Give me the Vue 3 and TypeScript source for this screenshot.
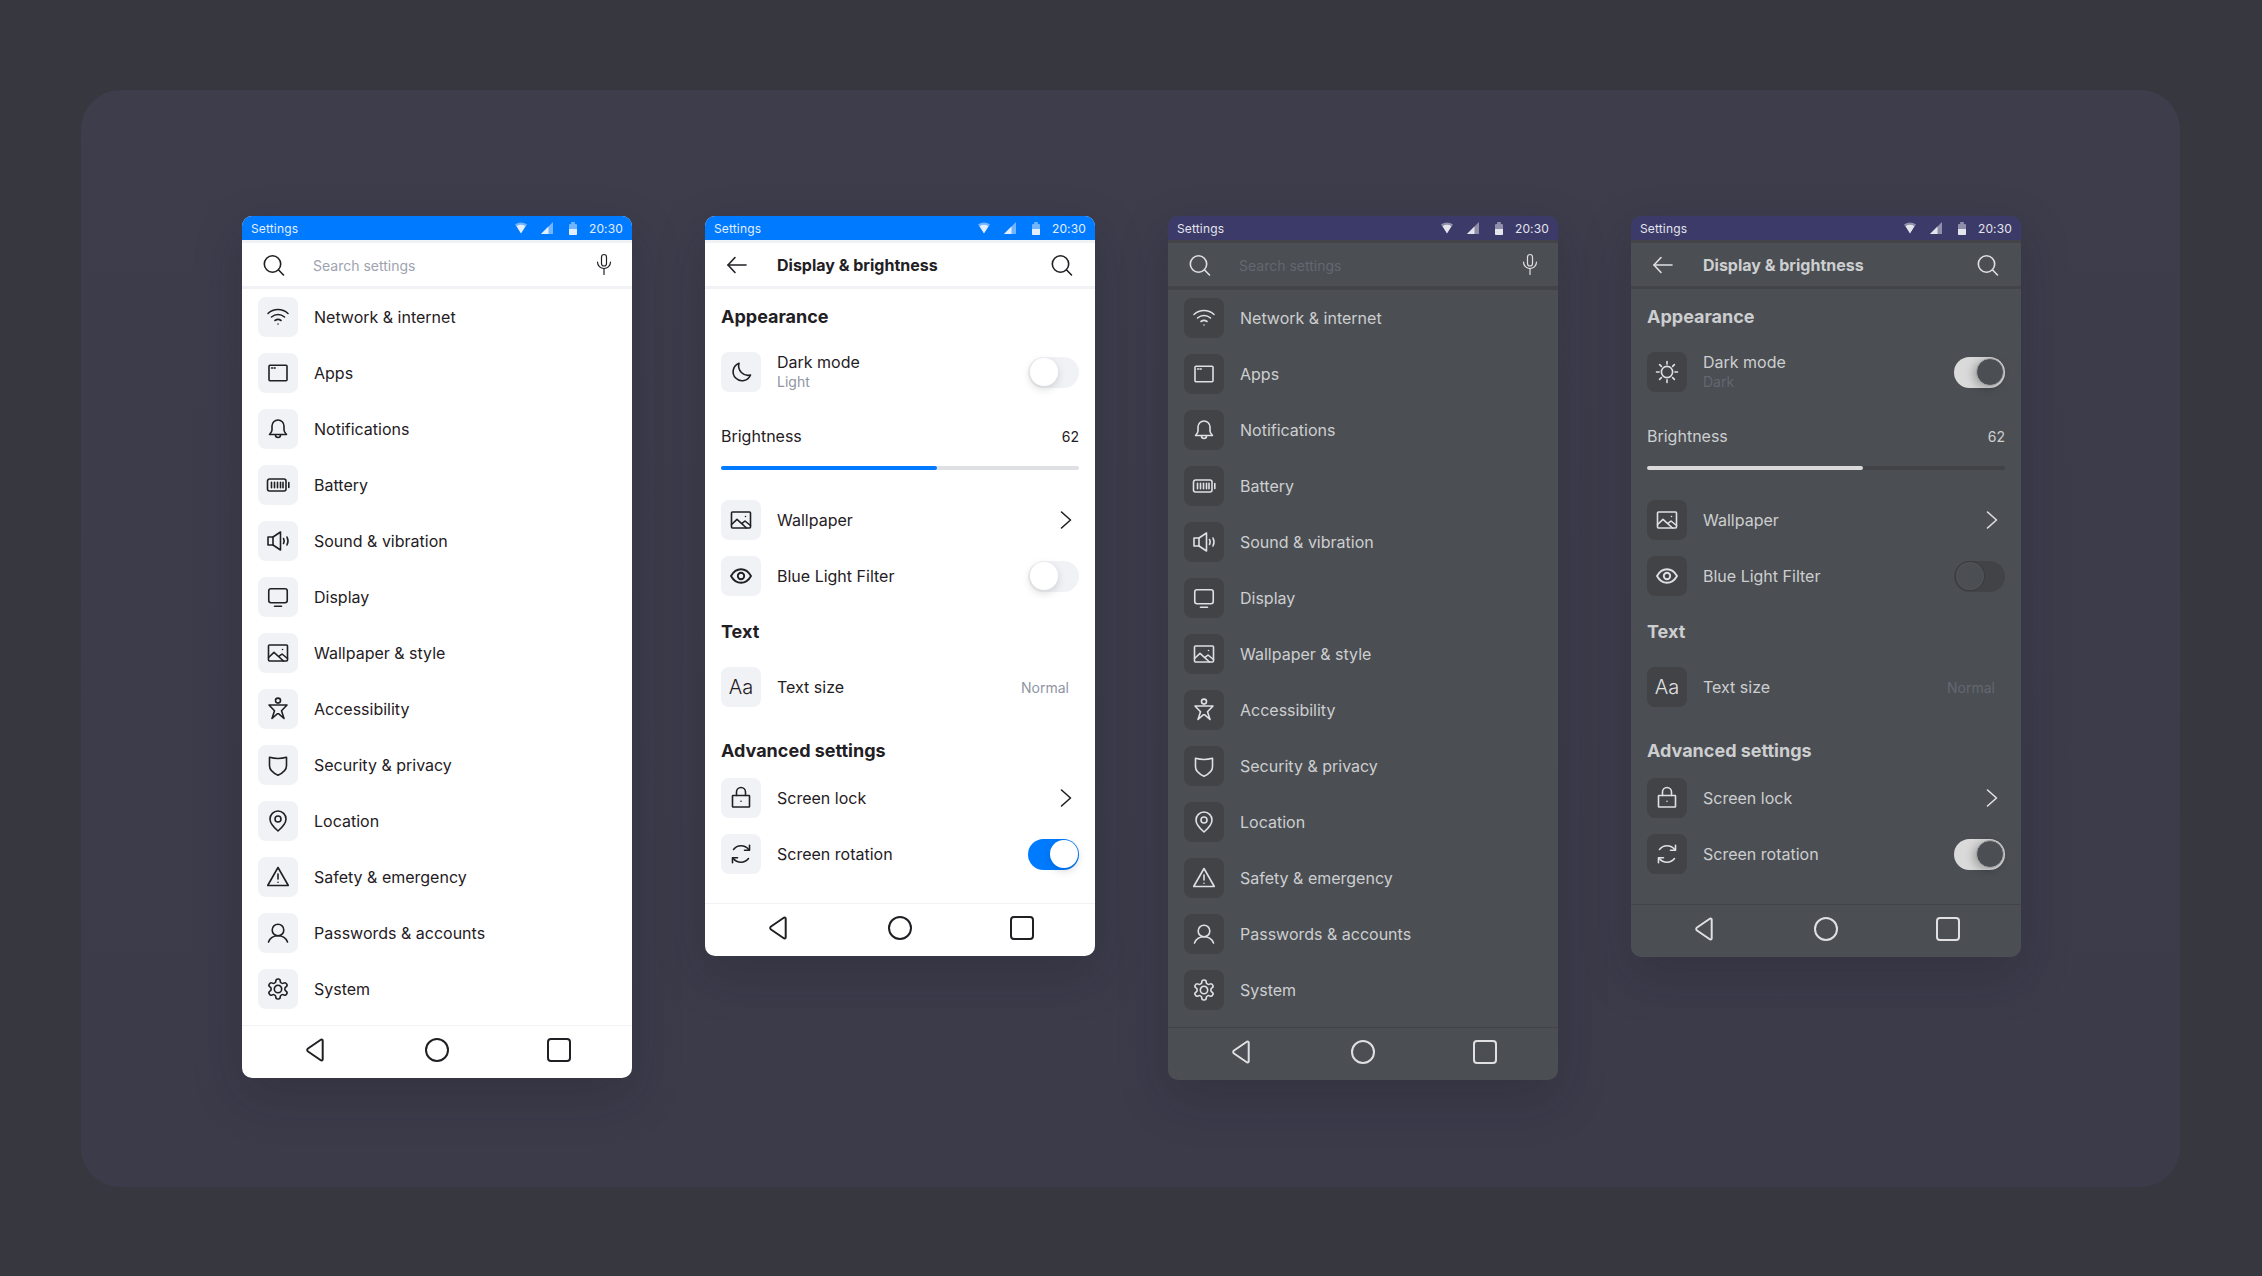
<script setup lang="ts">
import { h } from "vue"
import type { FunctionalComponent } from "vue"

function ring(cx: number, cy: number, r: number) {
	return `M${cx - r} ${cy}a${r} ${r} 0 1 0 ${r * 2} 0a${r} ${r} 0 1 0 ${-r * 2} 0z`
}

const icons: Record<string, string[]> = {
	wifi: ["M2 8.5C7.8 3.2 16.2 3.2 22 8.5", "M5.5 12C9.3 8.7 14.7 8.7 18.5 12", "M9 15.5c1.8-1.4 4.2-1.4 6 0", "M12 19h.01"],
	apps: ["M4 4.25h16a1 1 0 0 1 1 1v13.5a1 1 0 0 1-1 1H4a1 1 0 0 1-1-1V5.25a1 1 0 0 1 1-1z", "M5.6 7h1M8.2 7h1"],
	bell: ["M12 3a6 6 0 0 0-6 6v4c0 2-1 3-2.5 4.5h17C19 16 18 15 18 13V9a6 6 0 0 0-6-6z", "M9.5 18a2.5 2.5 0 0 0 5 0"],
	battery: ["M3.5 6h14.5a2 2 0 0 1 2 2v8a2 2 0 0 1-2 2H3.5a2 2 0 0 1-2-2V8a2 2 0 0 1 2-2z", "M5.5 9.2v5.6M8.5 9.2v5.6M11.5 9.2v5.6M14.5 9.2v5.6M17 9.2v5.6", "M22.8 9.5v5"],
	sound: ["M2 8h5v8H2z", "M7 8l7.5-5v18L7 16", "M17.5 9.5a5 5 0 0 1 0 5", "M21 8a9 9 0 0 1 0 8"],
	display: ["M5 3.75h14a2.25 2.25 0 0 1 2.25 2.25v9.5a2.25 2.25 0 0 1-2.25 2.25H5a2.25 2.25 0 0 1-2.25-2.25V6A2.25 2.25 0 0 1 5 3.75z", "M8.5 21.2h7"],
	image: ["M3.5 4h17a1 1 0 0 1 1 1v14a1 1 0 0 1-1 1h-17a1 1 0 0 1-1-1V5a1 1 0 0 1 1-1z", "M2.5 16.5l5.5-5.2 9.5 8.7", "M13.3 15.2l2.7-2.2 5.5 4.5", "M16.5 8.5h.01"],
	person: [ring(12, 3.6, 2.5), "M3 8h18l-5.5 5.8 2.5 7.7-5.5-4.8h-1L6 21.5l2.5-7.7z"],
	shield: ["M3.5 4.3c5.5 1.5 11.5 1.5 17 0v8.5c0 4.5-3.5 7.2-8.5 9.4C7 20 3.5 17.3 3.5 12.8z"],
	pin: ["M12 2a8 8 0 0 0-8 8c0 4.5 4.5 9 8 12 3.5-3 8-7.5 8-12a8 8 0 0 0-8-8z", ring(12, 10, 3)],
	warning: ["M12 2.5 1.7 20.5h20.6z", "M12 9v5", "M12 17.2h.01"],
	user: [ring(12, 9, 5.8), "M2.5 21c1.5-4 5-6.2 9.5-6.2s8 2.2 9.5 6.2"],
	gear: [
		"M12.22 2h-.44a2 2 0 0 0-2 2v.18a2 2 0 0 1-1 1.73l-.43.25a2 2 0 0 1-2 0l-.15-.08a2 2 0 0 0-2.73.73l-.22.38a2 2 0 0 0 .73 2.73l.15.1a2 2 0 0 1 1 1.72v.51a2 2 0 0 1-1 1.74l-.15.09a2 2 0 0 0-.73 2.73l.22.38a2 2 0 0 0 2.73.73l.15-.08a2 2 0 0 1 2 0l.43.25a2 2 0 0 1 1 1.73V20a2 2 0 0 0 2 2h.44a2 2 0 0 0 2-2v-.18a2 2 0 0 1 1-1.73l.43-.25a2 2 0 0 1 2 0l.15.08a2 2 0 0 0 2.73-.73l.22-.39a2 2 0 0 0-.73-2.73l-.15-.08a2 2 0 0 1-1-1.74v-.5a2 2 0 0 1 1-1.74l.15-.09a2 2 0 0 0 .73-2.73l-.22-.38a2 2 0 0 0-2.73-.73l-.15.08a2 2 0 0 1-2 0l-.43-.25a2 2 0 0 1-1-1.73V4a2 2 0 0 0-2-2z",
		ring(12, 12, 3.7)
	],
	moon: ["M10 3.3A9 9 0 1 0 21.5 15 9.5 9.5 0 0 1 10 3.3z"],
	sun: [ring(12, 12, 5.6), "M12 1.5v2.6M12 19.9v2.6M1.5 12h2.6M19.9 12h2.6M4.6 4.6l1.8 1.8M17.6 17.6l1.8 1.8M4.6 19.4l1.8-1.8M17.6 6.4l1.8-1.8"],
	eye: ["M2 12c2.5-4.5 6-6.8 10-6.8s7.5 2.3 10 6.8c-2.5 4.5-6 6.8-10 6.8S4.5 16.5 2 12z", ring(12, 12, 3.2)],
	lock: ["M4 9.5h16a.5.5 0 0 1 .5.5v10.5a.5.5 0 0 1-.5.5H4a.5.5 0 0 1-.5-.5V10a.5.5 0 0 1 .5-.5z", "M7.5 9.5V6a4.5 4.5 0 0 1 9 0v3.5", "M12 15.2h.01"],
	rotate: ["M4.5 7.5C6.5 5 9 3.8 12 3.8c3.5 0 6 1.5 8 4", "M20.5 3.2v5h-5", "M19.5 16.5C17.5 19 15 20.2 12 20.2c-3.5 0-6-1.5-8-4", "M3.5 20.8v-5h5"],
	chevron: ["M7.5 4l9 8-9 8"],
	back: ["M21 12H3", "M10 4.5 3 12l7 7.5"],
	search: [ring(10.5, 11, 8.2), "M16.6 17l4.9 5"],
	mic: ["M12 1.5a2.5 2.5 0 0 1 2.5 2.5v6.5a2.5 2.5 0 0 1-5 0V4A2.5 2.5 0 0 1 12 1.5z", "M5.5 9a6.5 6.5 0 0 0 13 0", "M12 15.5V21.5"],
	navBack: ["M17.8 1.7 5 10.5a1.8 1.8 0 0 0 0 3l12.8 8.8a1.2 1.2 0 0 0 1.9-1V2.7a1.2 1.2 0 0 0-1.9-1z"],
	navHome: [ring(12, 12, 11)],
	navRecent: ["M4 1h16a3 3 0 0 1 3 3v16a3 3 0 0 1-3 3H4a3 3 0 0 1-3-3V4a3 3 0 0 1 3-3z"]
}

const Ico: FunctionalComponent<{ name: string }> = (props) =>
	h(
		"svg",
		{
			viewBox: "0 0 24 24",
			fill: "none",
			stroke: "currentColor",
			"stroke-linecap": "round",
			"stroke-linejoin": "round",
			class: ["ico", `ico-${props.name}`]
		},
		icons[props.name].map((d) => h("path", { d }))
	)

const menu = [
	["wifi", "Network & internet"],
	["apps", "Apps"],
	["bell", "Notifications"],
	["battery", "Battery"],
	["sound", "Sound & vibration"],
	["display", "Display"],
	["image", "Wallpaper & style"],
	["person", "Accessibility"],
	["shield", "Security & privacy"],
	["pin", "Location"],
	["warning", "Safety & emergency"],
	["user", "Passwords & accounts"],
	["gear", "System"]
]

const phones = [
	{ screen: "menu", dark: false },
	{ screen: "display", dark: false },
	{ screen: "menu", dark: true },
	{ screen: "display", dark: true }
]
</script>

<template>
	<div class="page">
		<div class="board">
			<div v-for="(p, i) in phones" :key="i" class="phone" :class="{ dark: p.dark }">
				<div class="status">
					<span>Settings</span>
					<div class="status-right">
						<svg class="s-wifi" viewBox="0 0 12 12">
							<path d="M0 2.6C3.5-.3 8.5-.3 12 2.6L6 11z" fill="currentColor" opacity=".5" />
							<path d="M1.6 4.2C4.2 2.4 7.8 2.4 10.4 4.2L6 11.4z" fill="currentColor" />
						</svg>
						<svg class="s-signal" viewBox="0 0 12 12">
							<path d="M12 0V12H0z" fill="currentColor" opacity=".5" />
							<path d="M7.5 4.5V12H0z" fill="currentColor" />
						</svg>
						<svg class="s-batt" viewBox="0 0 8 13">
							<path d="M2.2 0h3.6v2H7a1 1 0 0 1 1 1v9a1 1 0 0 1-1 1H1a1 1 0 0 1-1-1V3a1 1 0 0 1 1-1h1.2z" fill="currentColor" opacity=".5" />
							<path d="M0 7h8v5a1 1 0 0 1-1 1H1a1 1 0 0 1-1-1z" fill="currentColor" />
						</svg>
						<span>20:30</span>
					</div>
				</div>

				<template v-if="p.screen === 'menu'">
					<div class="bar">
						<Ico name="search" class="bar-search" />
						<span class="placeholder">Search settings</span>
						<Ico name="mic" class="bar-mic" />
					</div>
					<div class="list">
						<div v-for="m in menu" :key="m[1]" class="row">
							<div class="tile"><Ico :name="m[0]" /></div>
							<span class="label">{{ m[1] }}</span>
						</div>
					</div>
				</template>

				<template v-else>
					<div class="bar">
						<Ico name="back" class="bar-back" />
						<span class="title">Display &amp; brightness</span>
						<Ico name="search" class="bar-end" />
					</div>
					<div class="detail">
						<h3 class="head first">Appearance</h3>
						<div class="rows">
							<div class="row">
								<div class="tile"><Ico :name="p.dark ? 'sun' : 'moon'" /></div>
								<div class="two-line">
									<span class="label">Dark mode</span>
									<span class="sub">{{ p.dark ? "Dark" : "Light" }}</span>
								</div>
								<div class="toggle" :class="{ on: p.dark }"><i></i></div>
							</div>
							<div class="bright">
								<div class="bright-top">
									<span class="label">Brightness</span>
									<span class="num">62</span>
								</div>
								<div class="track"><div class="fill"></div></div>
							</div>
							<div class="row">
								<div class="tile"><Ico name="image" /></div>
								<span class="label">Wallpaper</span>
								<Ico name="chevron" class="chev" />
							</div>
							<div class="row">
								<div class="tile"><Ico name="eye" /></div>
								<span class="label">Blue Light Filter</span>
								<div class="toggle"><i></i></div>
							</div>
						</div>

						<h3 class="head text-head">Text</h3>
						<div class="rows">
							<div class="row">
								<div class="tile"><span class="aa">Aa</span></div>
								<span class="label">Text size</span>
								<span class="value">Normal</span>
							</div>
						</div>

						<h3 class="head adv-head">Advanced settings</h3>
						<div class="rows">
							<div class="row">
								<div class="tile"><Ico name="lock" /></div>
								<span class="label">Screen lock</span>
								<Ico name="chevron" class="chev" />
							</div>
							<div class="row">
								<div class="tile"><Ico name="rotate" /></div>
								<span class="label">Screen rotation</span>
								<div class="toggle on"><i></i></div>
							</div>
						</div>
					</div>
				</template>

				<div class="nav">
					<Ico name="navBack" />
					<Ico name="navHome" />
					<Ico name="navRecent" />
				</div>
			</div>
		</div>
	</div>
</template>

<style>
html,
body {
	margin: 0;
	background: #37373f;
}
</style>

<style scoped>
.page {
	width: 2262px;
	height: 1276px;
	box-sizing: border-box;
	padding: 90px 82px 89px 81px;
	background: #37373f;
	font-family: Inter, "Liberation Sans", sans-serif;
	overflow: hidden;
}

.board {
	height: 100%;
	box-sizing: border-box;
	display: flex;
	align-items: flex-start;
	gap: 73px;
	padding: 126px 0 0 161px;
	background: linear-gradient(180deg, #3e3d4c, #3c3b4a);
	border-radius: 40px;
}

.phone {
	--bg: #ffffff;
	--ink: #1f2024;
	--tile: #f1f2f6;
	--line: #f1f2f5;
	--muted: #8f95a3;
	--hint: #9ea3b0;
	--status: #007aff;
	--status-ink: #e3efff;
	--track: #dfe0e4;
	--fill: #007aff;
	--off: #f1f2f6;
	--knob: #ffffff;
	--on: #007aff;
	--glyph: #1f2024;
	width: 390px;
	flex: none;
	background: var(--bg);
	color: var(--ink);
	border-radius: 10px;
	overflow: hidden;
	box-shadow: 0 18px 50px rgba(24, 24, 34, 0.22);
}

.phone.dark {
	--bg: #4b4e53;
	--ink: #cdced0;
	--tile: #414346;
	--line: #424448;
	--muted: #636771;
	--hint: #636771;
	--status: #3b3a68;
	--status-ink: #e4e4ec;
	--track: #414346;
	--fill: #dadada;
	--off: #414346;
	--knob: #4b4e53;
	--on: #dadada;
	--glyph: #e0e0e2;
}

.ico {
	display: block;
	width: 24px;
	height: 24px;
	flex: none;
	color: var(--glyph);
	stroke-width: 1.6;
}

.ico-eye {
	stroke-width: 1.9;
}

.status {
	height: 24px;
	padding: 0 9px;
	display: flex;
	align-items: center;
	justify-content: space-between;
	background: var(--status);
	color: var(--status-ink);
	font-size: 12px;
	letter-spacing: 0.15px;
}

.status-right {
	display: flex;
	align-items: center;
}

.s-wifi,
.s-signal {
	width: 12px;
	height: 12px;
}

.s-wifi {
	margin-right: 14px;
}

.s-signal {
	margin-right: 16px;
}

.s-batt {
	width: 8px;
	height: 13px;
	margin-right: 12px;
}

.bar {
	height: 43px;
	margin: 3px 0;
	display: flex;
	align-items: center;
	position: relative;
	box-shadow: 0 -3px 0 var(--line), 0 3px 0 var(--line);
}

.bar-search {
	margin-left: 20px;
}

.placeholder {
	margin-left: 27px;
	padding-top: 2px;
	font-size: 14px;
	color: var(--hint);
}

.bar-mic {
	margin-left: auto;
	margin-right: 16px;
	stroke-width: 1.2;
}

.bar-back {
	margin-left: 20px;
}

.title {
	margin-left: 28px;
	font-size: 16px;
	font-weight: 700;
}

.bar-end {
	margin-left: auto;
	margin-right: 21px;
}

.list {
	padding: 8px 16px 16px;
	display: flex;
	flex-direction: column;
	gap: 16px;
}

.dark .list {
	border-top: 1px solid var(--line);
	padding-bottom: 17px;
}

.row {
	height: 40px;
	display: flex;
	align-items: center;
	gap: 16px;
}

.tile {
	width: 40px;
	height: 40px;
	flex: none;
	display: flex;
	align-items: center;
	justify-content: center;
	background: var(--tile);
	border-radius: 8px;
}

.label {
	font-size: 16px;
	line-height: 20px;
}

.two-line {
	display: flex;
	flex-direction: column;
}

.two-line .label {
	line-height: 19px;
}

.sub {
	font-size: 14px;
	line-height: 19px;
	color: var(--muted);
}

.detail {
	padding: 17px 16px 29px;
}

.dark .detail {
	padding-bottom: 30px;
}

.head {
	margin: 0 0 24px;
	font-size: 18px;
	line-height: 22px;
	font-weight: 700;
}

.text-head {
	margin-top: 25px;
}

.adv-head {
	margin-top: 33px;
	margin-bottom: 16px;
}

.rows {
	display: flex;
	flex-direction: column;
	gap: 16px;
}

.bright {
	margin: 18px 0 14px;
}

.bright-top {
	display: flex;
	justify-content: space-between;
	align-items: center;
}

.num {
	font-size: 14px;
}

.track {
	margin-top: 20px;
	height: 4px;
	border-radius: 2px;
	background: var(--track);
}

.fill {
	width: 60.3%;
	height: 100%;
	border-radius: 2px;
	background: var(--fill);
}

.chev {
	margin-left: auto;
	margin-right: 1px;
}

.value {
	margin-left: auto;
	margin-right: 10px;
	font-size: 14px;
	color: var(--muted);
}

.aa {
	font-size: 20px;
	font-weight: 300;
	color: var(--glyph);
}

.toggle {
	width: 51px;
	height: 31px;
	margin-left: auto;
	box-sizing: border-box;
	padding: 1.5px;
	border-radius: 16px;
	background: var(--off);
	display: flex;
}

.toggle i {
	width: 28px;
	height: 28px;
	border-radius: 50%;
	box-sizing: border-box;
	background: var(--knob);
	box-shadow: 0 3px 8px rgba(0, 0, 0, 0.15);
}

.dark .toggle i {
	border: 1px solid rgba(255, 255, 255, 0.04);
	box-shadow: 0 0 0 1px rgba(0, 0, 0, 0.12);
}

.toggle.on {
	background: var(--on);
	justify-content: flex-end;
}

.dark .toggle.on i {
	border-color: #a9aaac;
	box-shadow: -3px 2px 8px rgba(0, 0, 0, 0.25);
}

.nav {
	border-top: 1px solid var(--line);
	padding: 12px 0 16px;
	display: flex;
	justify-content: center;
	gap: 98px;
}

.nav .ico {
	stroke-width: 2;
}
</style>
